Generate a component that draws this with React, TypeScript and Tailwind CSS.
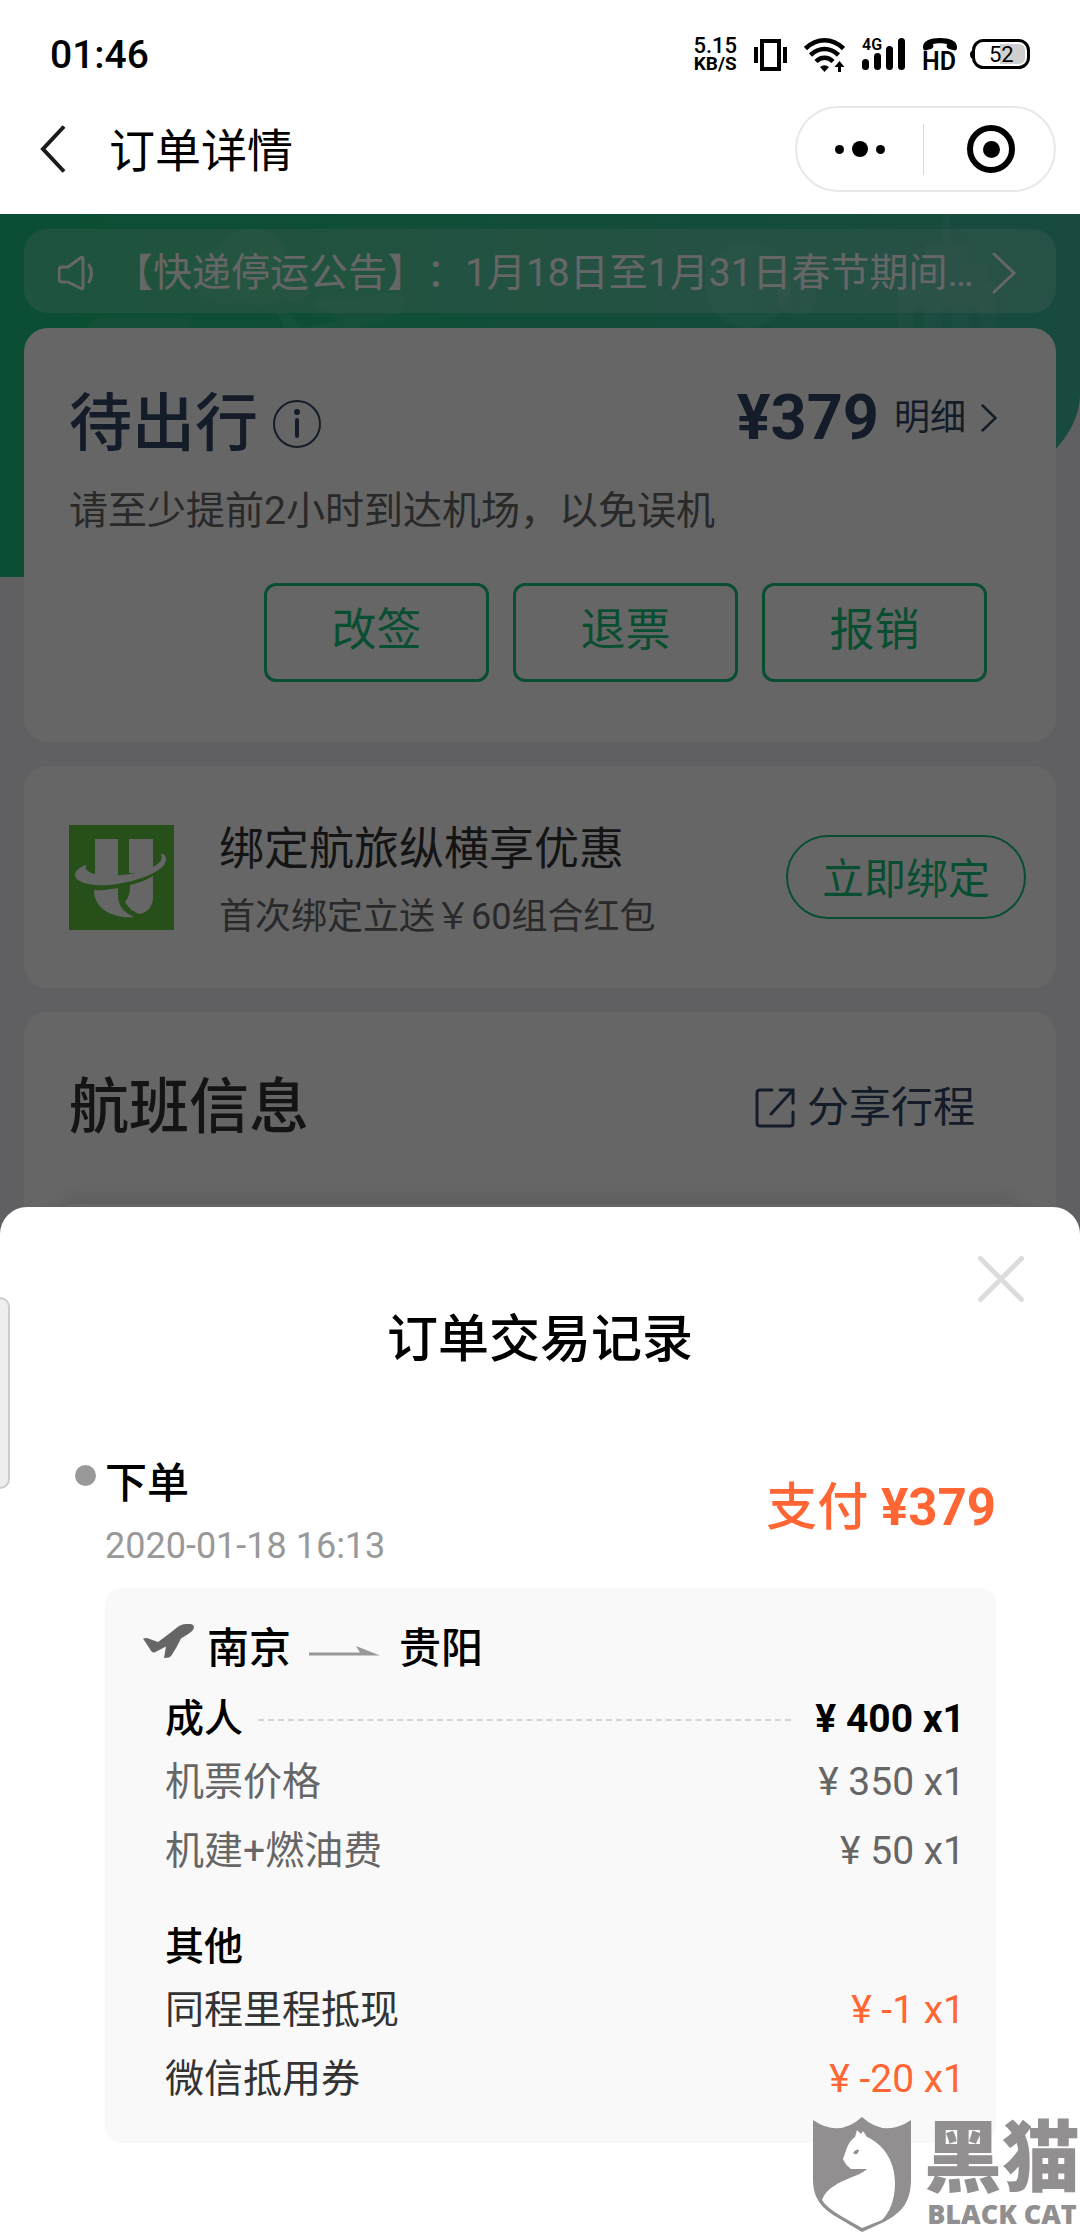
import type { ReactNode } from "react";

type Fee = { label: string; price: string };

const actions = ["改签", "退票", "报销"];

const ticketFees: Fee[] = [
  { label: "机票价格", price: "¥ 350 x1" },
  { label: "机建+燃油费", price: "¥ 50 x1" },
];

const discounts: Fee[] = [
  { label: "同程里程抵现", price: "¥ -1 x1" },
  { label: "微信抵用券", price: "¥ -20 x1" },
];

function StatusBar() {
  return (
    <div className="flex h-[106px] items-center justify-between pt-[3px] pr-[50px] pl-[50px] text-black">
      <span className="text-[39px] leading-[48px] font-medium">01:46</span>
      <div className="flex items-center gap-[17px]">
        <div className="flex flex-col items-center font-medium">
          <span className="text-[22px] leading-[18px]">5.15</span>
          <span className="text-[19px] leading-[18px] font-bold">KB/S</span>
        </div>
        <svg className="h-8 w-[33px]" viewBox="0 0 33 32" aria-hidden="true">
          <rect x="8" y="2" width="17" height="28" fill="none" stroke="#000" strokeWidth="4" />
          <path d="M0 8h4v16H0zM29 8h4v16h-4z" />
        </svg>
        <svg className="h-[34px] w-[41px]" viewBox="0 0 41 34" fill="none" stroke="#000" strokeWidth="4.500" aria-hidden="true">
          <path d="M1.500 10.500C13 -0.500 28 -0.500 39.500 10.500" />
          <path d="M6.500 17C15 9 26 9 34.500 17" />
          <path d="M12 23.500C17 18.500 24 18.500 29 23.500" />
          <path d="M16 29q4.500-3.500 9 0l-4.500 5z" fill="#000" stroke="none" />
          <path d="M35.500 34V27" strokeWidth="3" />
          <path d="M30.500 29l5-6 5 6z" fill="#000" stroke="none" />
        </svg>
        <svg className="h-[33px] w-11 overflow-visible" viewBox="0 0 44 33" aria-hidden="true">
          <text x="0" y="12" fontSize="16" fontWeight="600" fontFamily="Roboto, sans-serif">
            4G
          </text>
          <rect x="0" y="21" width="7" height="11" rx="3.500" />
          <rect x="12" y="15" width="7" height="17" rx="3.500" />
          <rect x="24" y="8" width="7" height="24" rx="3.500" />
          <rect x="36" y="0" width="7" height="32" rx="3.500" />
        </svg>
        <svg className="h-[33px] w-[34px] overflow-visible" viewBox="0 0 34 33" aria-hidden="true">
          <path d="M0 9C0 3 7 0 17 0s17 3 17 9c0 3-1 4-4 3l-4-1c-2-1-3-2-2-5-4-1-10-1-14 0 1 3 0 4-2 5l-4 1c-3 1-4 0-4-3z" />
          <text x="-1" y="32" fontSize="25" fontWeight="600" fontFamily="Roboto, sans-serif">
            HD
          </text>
        </svg>
        <svg className="-ml-1 h-[31px] w-[60px]" viewBox="0 0 60 31" aria-hidden="true">
          <rect x="3.500" y="1.500" width="55" height="27" rx="10" fill="#fff" stroke="#000" strokeWidth="3" />
          <path d="M30 5h17q8 0 8 5v10q0 5-8 5H30z" fill="#cfcfcf" />
          <path d="M3 11v9q-3-1-3-4.500T3 11z" />
          <text x="19" y="23" fontSize="22" fontFamily="Roboto, sans-serif">
            52
          </text>
        </svg>
      </div>
    </div>
  );
}

function NavBar() {
  return (
    <div className="flex items-center pr-6 pb-[22px] pl-[40px]">
      <button type="button" aria-label="返回" className="mr-[43px]">
        <svg className="h-12 w-[26px]" viewBox="0 0 26 48" fill="none" stroke="#1a1a1a" strokeWidth="4">
          <path d="M24 1.500L3 24l21 22.500" />
        </svg>
      </button>
      <h1 className="flex-1 pt-1 text-[46px] leading-[60px]">订单详情</h1>
      <div className="flex h-[86px] w-[261px] items-center rounded-full border-2 border-[#e8e8e8]">
        <button type="button" aria-label="更多" className="flex h-full flex-1 items-center justify-center gap-2">
          <span className="size-[9px] rounded-full bg-black" />
          <span className="size-4 rounded-full bg-black" />
          <span className="size-[9px] rounded-full bg-black" />
        </button>
        <span className="h-[51px] w-px bg-[#d9d9d9]" />
        <button type="button" aria-label="关闭小程序" className="flex h-full flex-1 items-center justify-center pl-1">
          <span className="flex size-12 items-center justify-center rounded-full border-6 border-black">
            <span className="size-[17px] rounded-full bg-black" />
          </span>
        </button>
      </div>
    </div>
  );
}

function HeroBackground() {
  return (
    <svg
      className="absolute inset-x-0 top-0 h-[363px] w-full"
      viewBox="0 0 1080 363"
      preserveAspectRatio="none"
      aria-hidden="true"
    >
      <defs>
        <linearGradient id="hero" x1="0" x2="1" y1="0" y2="0">
          <stop offset="0" stopColor="#1ec47f" />
          <stop offset="0.35" stopColor="#29c389" />
          <stop offset="1" stopColor="#3dbaa0" />
        </linearGradient>
      </defs>
      <path d="M0 0H1080V180Q1080 208 1056 235L940 363H0Z" fill="url(#hero)" />
      <g fill="#fff" fillOpacity="0.07">
        <path d="M218 36a38 38 0 0 1 72 16c16 2 22 14 20 24-3 14-18 14-25 9-16 9-34 7-45 1-22 9-48-2-49-24 0-15 12-25 27-26z" />
        <path d="M275 96c12 0 20 8 26 18l40-8-28-16c6-8 18-8 40-2 26-14 52-10 52-1 0 12-22 20-48 28H285z" />
        <path d="M88 114q2-10 16-10h74q14 0 14 10z" />
        <circle cx="748" cy="71" r="43" />
        <circle cx="797" cy="83" r="20" />
        <path d="M943 0h7v29h19v21h18v19h9v45h-16V94q-6-5-11 0v20h-17V94q-6-5-11 0v20h-17V94q-6-5-11 0v20h-15V69h14V50h13V29h18z" />
      </g>
    </svg>
  );
}

function Card({ className = "", children }: { className?: string; children: ReactNode }) {
  return <section className={`rounded-3xl bg-white ${className}`}>{children}</section>;
}

function Notice() {
  return (
    <a href="#notice" className="flex h-[84px] items-center rounded-3xl bg-white/20 pt-1 pr-[40px] pl-[34px] text-white">
      <svg className="h-[34px] w-[38px] shrink-0" viewBox="0 0 38 34" fill="none" stroke="#fff" strokeWidth="3" strokeLinecap="round">
        <path d="M7 26H4q-3 0-3-3V14q0-3 3-3h6L23 1.500q2-1 2 1.500v28q0 2.500-2 1.500L10 26" />
        <path d="M31 9q5 8 0 17" />
      </svg>
      <span className="ml-[18px] flex-1 truncate text-[39px] leading-[54px] [text-spacing-trim:space-all]">
        【快递停运公告】：1月18日至1月31日春节期间…
      </span>
      <svg className="h-[42px] w-6 shrink-0" viewBox="0 0 24 42" fill="none" stroke="#fff" strokeWidth="3" strokeLinecap="round">
        <path d="M2 2l20 19L2 40" />
      </svg>
    </a>
  );
}

function OrderCard() {
  return (
    <Card className="px-[45px] pt-[54px] pb-[60px]">
      <div className="flex items-start justify-between pr-[14px] text-[#304864]">
        <h2 className="flex items-center gap-[15px] text-[63px] leading-[84px] font-medium">
          待出行
          <svg className="size-12" viewBox="0 0 48 48" aria-hidden="true">
            <circle cx="24" cy="24" r="23" fill="none" stroke="currentColor" strokeWidth="2" />
            <circle cx="24" cy="12" r="3" fill="currentColor" />
            <path d="M24 20v16" stroke="currentColor" strokeWidth="4" strokeLinecap="round" />
          </svg>
        </h2>
        <button type="button" className="flex items-center leading-[72px]">
          <span className="text-[63px] font-bold">¥379</span>
          <span className="ml-[15px] text-[36px]">明细</span>
          <svg className="ml-[15px] h-7 w-4" viewBox="0 0 16 28" fill="none" stroke="currentColor" strokeWidth="2.500" strokeLinecap="round">
            <path d="M1.500 1.500L14.500 14l-13 12.500" />
          </svg>
        </button>
      </div>
      <p className="mt-[18px] text-[39px] leading-[54px] text-[#666]">请至少提前2小时到达机场，以免误机</p>
      <div className="mt-[45px] flex justify-end gap-6 pr-6">
        {actions.map((label) => (
          <button
            key={label}
            type="button"
            className="h-[99px] w-[225px] rounded-xl border-3 border-[#1bc47d] pb-1 text-[45px] text-[#1bc47d]"
          >
            {label}
          </button>
        ))}
      </div>
    </Card>
  );
}

function BindCard() {
  return (
    <Card className="flex h-[222px] items-center pr-[30px] pl-[45px]">
      <svg className="size-[105px] shrink-0" viewBox="0 0 105 105" aria-hidden="true">
        <path d="M0 0h105v105H0z" fill="#5fc543" />
        <g fill="#fff">
          <path d="M26 14h23v38H26zM60 14h24v34H60z" />
          <path d="M18 40C10 42 6 46 6 50c1 8 16 11 34 10 22-2 57-12 57-26 0-3-2-5-5-5 3 7-4 11-10 14-12 5-24 7-36 7.500-10 .5-22-.5-27-4.500-3-2-3-4-1-6z" />
          <path d="M25 65c8 1 17-1 24-2v7c0 10 5 17 16 22-20 2-40-8-40-26z" />
          <path d="M61 60c9-2 17-5 23-9v21c0 10-6 16-14 17-6-2-12-8-14-12 4-5 5-9 5-17z" />
        </g>
      </svg>
      <div className="ml-[45px] flex-1 pt-[7px]">
        <p className="text-[45px] leading-[64px] text-[#333]">绑定航旅纵横享优惠</p>
        <p className="mt-2 text-[36px] leading-[54px] text-[#666]">首次绑定立送￥60组合红包</p>
      </div>
      <button
        type="button"
        className="h-[84px] w-60 rounded-full border-2 border-[#1bc47d] pt-1 text-[42px] text-[#1bc47d]"
      >
        立即绑定
      </button>
    </Card>
  );
}

function FlightCard() {
  return (
    <Card className="h-[400px] px-9 pt-[54px]">
      <div className="flex items-center justify-between pr-[45px] pl-[9px]">
        <h2 className="text-[60px] leading-[84px] font-medium text-[#333]">航班信息</h2>
        <button type="button" className="flex items-center gap-3 text-[42px] leading-[84px] text-[#304864]">
          <svg className="size-10" viewBox="0 0 40 40" fill="none" stroke="currentColor" strokeWidth="3" strokeLinecap="round">
            <path d="M17 2H5Q2 2 2 5v30q0 3 3 3h30q3 0 3-3V24M25 2h13v13M38 2L16 26" />
          </svg>
          分享行程
        </button>
      </div>
      <div className="mt-[54px] h-[200px] rounded-xl bg-white shadow-[0_0_24px_rgba(0,0,0,0.18)]" />
    </Card>
  );
}

function FeeRow({ fee, labelColor, priceColor }: { fee: Fee; labelColor: string; priceColor: string }) {
  return (
    <div className="flex justify-between text-[39px] leading-[69px]">
      <dt className={labelColor}>{fee.label}</dt>
      <dd className={priceColor}>{fee.price}</dd>
    </div>
  );
}

function RouteTitle() {
  return (
    <div className="-ml-[22px] flex h-[70px] items-center text-[42px] leading-[70px] font-medium text-black">
      <svg className="mb-4 h-[34px] w-[51px]" viewBox="0 0 51 34" aria-hidden="true">
        <path
          d="M0 14.500l4-.5 11 4Q26 10 34 3.500 38 0 43 0h5q3 1 3 3 0 3-5 6.500l-8 5Q34 23 28.500 31.500 27 34 21 34l2-11.500-11.500 6Q9 29 7.500 26z"
          fill="#666"
        />
      </svg>
      <span className="ml-[13px]">南京</span>
      <svg className="mt-1 mr-[19px] ml-[18px] h-[10px] w-[71px]" viewBox="0 0 71 10" aria-hidden="true">
        <path d="M0 6.500h51L47 0l24 9.500H0z" fill="#999" />
      </svg>
      <span>贵阳</span>
    </div>
  );
}

function RecordSheet() {
  return (
    <div role="dialog" aria-labelledby="sheet-title" className="relative rounded-t-[27px] bg-white pt-[98px] pr-[84px] pb-[89px] pl-[105px]">
      <button type="button" aria-label="关闭" className="absolute top-[49px] right-[56px]">
        <svg className="size-[46px]" viewBox="0 0 46 46" stroke="#dcdcdc" strokeWidth="5" strokeLinecap="round">
          <path d="M2.500 2.500l41 41M43.500 2.500l-41 41" />
        </svg>
      </button>
      <div className="absolute top-[90px] left-0 h-48 w-[10px] rounded-r-xl border-2 border-l-0 border-[#ccc] bg-[#eee]" />

      <h2 id="sheet-title" className="pr-[21px] text-center text-[51px] leading-[70px] font-medium text-black">
        订单交易记录
      </h2>

      <div className="mt-[76px] flex items-start justify-between">
        <div>
          <p className="relative text-[42px] leading-[66px] font-medium text-black">
            <span className="absolute top-[14px] -left-[30px] size-[21px] rounded-full bg-[#999]" />
            下单
          </p>
          <p className="text-[36px] leading-[58px] text-[#999]">2020-01-18 16:13</p>
        </div>
        <p className="text-[51px] leading-[114px] font-medium text-[#ff6633]">
          支付 <strong className="font-bold">¥379</strong>
        </p>
      </div>

      <div className="mt-[13px] rounded-2xl bg-[#f9f9f9] pt-[26px] pr-[31px] pb-[29px] pl-[60px]">
        <RouteTitle />
        <dl>
          <div className="mt-[7px] flex items-center text-[39px] leading-[57px] font-medium text-black">
            <dt>成人</dt>
            <span className="mr-6 ml-[15px] h-0 flex-1 border-t-2 border-dashed border-[#d4d4d4]" />
            <dd className="font-bold">¥ 400 x1</dd>
          </div>
          {ticketFees.map((fee) => (
            <FeeRow key={fee.label} fee={fee} labelColor="text-[#666]" priceColor="text-[#666]" />
          ))}
          <dt className="mt-[33px] text-[39px] leading-[57px] font-medium text-black">其他</dt>
          {discounts.map((fee) => (
            <FeeRow key={fee.label} fee={fee} labelColor="text-[#333]" priceColor="text-[#ff6633]" />
          ))}
        </dl>
      </div>
    </div>
  );
}

function Watermark() {
  return (
    <div className="absolute right-0 bottom-0 flex items-end gap-[13px] text-[#918f8f]">
      <svg className="h-[115px] w-[98px]" viewBox="0 0 98 115" aria-hidden="true">
        <path d="M0 3q26 18 49-3 23 21 49 3v59c0 24-10 34-27 43L49 115 27 102C9 92 0 82 0 62z" fill="currentColor" />
        <path
          d="M42 20l2-7 4 4 2-3 4 6c18 8 28 26 28 46 0 18-6 30-13 37L49 111 28 99Q13 90 9 83c4-12 18-18 30-23 8-3 12-5 15-8H38c-5-4-6-6-8-10 4-10 4-16 12-22z"
          fill="#fff"
        />
        <path d="M40 36q3-5 6-3-1 5-4 4z" fill="currentColor" />
      </svg>
      <div className="flex flex-col items-center font-black">
        <span className="text-[78px] leading-[72px]">黑猫</span>
        <span className="font-['Open_Sans',sans-serif] text-[27px] leading-[36px] font-extrabold">BLACK CAT</span>
      </div>
    </div>
  );
}

export default function App() {
  return (
    <div className="flex min-h-screen flex-col bg-white font-[Roboto,'Noto_Sans_CJK_SC',sans-serif]">
      <header>
        <StatusBar />
        <NavBar />
      </header>
      <main className="relative flex flex-1 flex-col overflow-hidden bg-[#f0f0f5]">
        <div className="relative">
          <HeroBackground />
          <div className="relative flex flex-col px-6 pt-[15px]">
            <Notice />
            <div className="mt-[15px] flex flex-col gap-6">
              <OrderCard />
              <BindCard />
              <FlightCard />
            </div>
          </div>
        </div>
        <div className="absolute inset-0 flex flex-col justify-end bg-black/60">
          <RecordSheet />
          <Watermark />
        </div>
      </main>
    </div>
  );
}
